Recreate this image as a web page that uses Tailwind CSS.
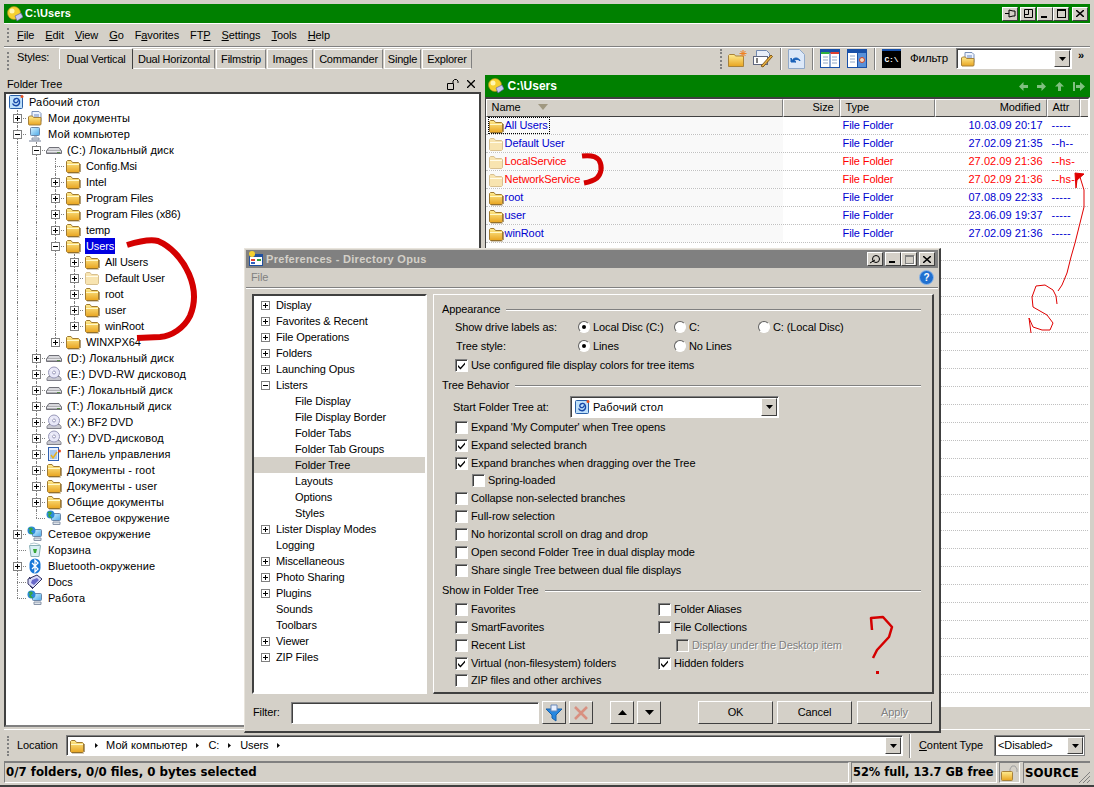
<!DOCTYPE html>
<html lang="en">
<head>
<meta charset="UTF-8">
<title>C:\Users</title>
<script src="https://cdn.jsdelivr.net/npm/@tailwindcss/browser@4"></script>
</head>
<body class="bg-[#d4d0c8]">
<svg width="0" height="0" class="absolute">
  <defs>
    <linearGradient id="fg" x1="0" y1="0" x2="0" y2="1"><stop offset="0" stop-color="#ffec90"/><stop offset="1" stop-color="#e8a420"/></linearGradient>
    <linearGradient id="scr" x1="0" y1="0" x2="1" y2="1"><stop offset="0" stop-color="#d8f4ff"/><stop offset="1" stop-color="#4aa8e8"/></linearGradient>
    <symbol id="folder" viewBox="0 0 16 16"><path d="M1.5 13.5V3.5l1-1h3.5l1.5 2h6l1 1v8l-1 1h-11z" fill="url(#fg)" stroke="#a07a30"/><path d="M2 6.5h12" stroke="#fff8c8"/><path d="M15.5 6v8M3 15h12" stroke="#7a5a20" opacity=".6"/></symbol>
    <symbol id="folderpale" viewBox="0 0 16 16"><path d="M1.5 13.5V3.5l1-1h3.5l1.5 2h6l1 1v8l-1 1h-11z" fill="#f8e4b0" stroke="#d8c090"/><path d="M2 6.5h12" stroke="#fffbe8"/></symbol>
    <symbol id="mydocs" viewBox="0 0 16 16"><path d="M5 1.5h7l2 2v8H5z" fill="#eef4ff" stroke="#7a90b8"/><path d="M7 5h5M7 7h5M7 9h5" stroke="#6a88c0"/><path d="M1.5 14V7l1-1h3l1 1.500h7.500V14l-.5 1H2z" fill="url(#fg)" stroke="#a8823a"/></symbol>
    <symbol id="desktop" viewBox="0 0 16 16"><rect x="1.500" y="1.500" width="13" height="13" rx="1" fill="#bfe0fa" stroke="#2a60a8"/><path d="M4.500 9.500c1.500 3 6 3 7-.500.500-3-1.500-5-3.500-4.500-2.500.500-3 3-1 4 1.500.500 3-.500 3-2" fill="none" stroke="#1848a8" stroke-width="1.400"/><circle cx="14" cy="2.500" r="1.500" fill="#e85020"/></symbol>
    <symbol id="computer" viewBox="0 0 16 16"><rect x="3.500" y="1.500" width="9" height="8" rx="1" fill="url(#scr)" stroke="#6a86a8"/><path d="M5 12h7v2H5z" fill="#dfe4ea" stroke="#8894a8"/><path d="M2 15h12" stroke="#a0a8b8" stroke-width="1.500"/><path d="M7 10h3v2H7z" fill="#b8c0d0"/></symbol>
    <symbol id="drive" viewBox="0 0 16 16"><path d="M3 5.500h10l2.500 3.500v2.500h-15V9z" fill="#b0b0b4" stroke="#707078"/><path d="M1 9.500h14" stroke="#e8e8ec"/><path d="M3 6h10l1 2H2.500z" fill="#d8d8dc"/><rect x="11" y="10" width="3" height="1" fill="#5a8a4a"/></symbol>
    <symbol id="cd" viewBox="0 0 16 16"><path d="M2.500 10.500h11l1.500 2v2H1v-2z" fill="#c8c8d0" stroke="#80808a"/><circle cx="8" cy="6.500" r="5.500" fill="#e8e8f8" stroke="#9898b8"/><circle cx="8" cy="6.500" r="1.500" fill="#fff" stroke="#9898b8"/><path d="M5 3.500l2 2" stroke="#fff"/></symbol>
    <symbol id="panel" viewBox="0 0 16 16"><rect x="2.500" y="1.500" width="10" height="13" fill="#e8f0ff" stroke="#3060b0"/><path d="M4 4h7v9H4z" fill="#a8c8f0"/><path d="M5 9l2 3 4-6" fill="none" stroke="#e8b020" stroke-width="1.500"/><circle cx="13.500" cy="5" r="1.500" fill="#e84820"/></symbol>
    <symbol id="net" viewBox="0 0 16 16"><rect x="5.500" y="3.500" width="9" height="7" rx="1" fill="url(#scr)" stroke="#6a86a8"/><circle cx="4.500" cy="4.500" r="4" fill="#2c8ad8"/><path d="M2 3c1-1 3-1 3 0s-2 1-2 2.500S5 7 5 8" stroke="#38a838" stroke-width="1.600" fill="none"/><path d="M7 12h7v2.500H7z" fill="#dfe4ea" stroke="#8894a8"/></symbol>
    <symbol id="recycle" viewBox="0 0 16 16"><path d="M2.500 3.500h11l-1.500 11H4z" fill="#d8f0f4" stroke="#8ab0b8"/><path d="M6 7h4l-1 4H7z" fill="#38a838"/><path d="M3 2l4-1 4 1 2 1" stroke="#b0c8d0" fill="none"/></symbol>
    <symbol id="bt" viewBox="0 0 16 16"><rect x="2.500" y="0.500" width="11" height="15" rx="5.500" fill="#1878d8"/><path d="M5 5l6 6-3 3V2l3 3-6 6" fill="none" stroke="#fff" stroke-width="1.300"/></symbol>
    <symbol id="docs" viewBox="0 0 16 16"><path d="M1 5l9-4 5 4-9 9-5-4z" fill="#d8d8f8" stroke="#303060"/><path d="M5 6l5-2 2 2-5 5-3-2z" fill="#6868c8"/><path d="M3 12l3 3M2 3l2 2" stroke="#303060"/></symbol>
    <symbol id="up" viewBox="0 0 9 5"><path d="M4.500 0L9 5H0z" fill="#000"/></symbol>
    <symbol id="down" viewBox="0 0 9 5"><path d="M4.500 5L9 0H0z" fill="#000"/></symbol>
    <symbol id="crumb" viewBox="0 0 4 7"><path d="M0 0l4 3.500L0 7z" fill="#000"/></symbol>
    <symbol id="logo" viewBox="0 0 16 16"><circle cx="7" cy="7" r="6.500" fill="#f6d030" stroke="#a88820" stroke-width=".600"/><circle cx="5" cy="5" r="2.500" fill="#fff6b0"/><path d="M8 10l6-3 2 4-6 4z" fill="#c8c8f0" stroke="#5858a0" stroke-width=".600"/></symbol>
    <symbol id="check" viewBox="0 0 9 9"><path d="M1 4l2.500 2.500L8 1.500v2L3.500 8.500 1 6z" fill="#000"/></symbol>
  </defs>
</svg>

<div class="relative w-[1094px] h-[787px] overflow-hidden bg-[#d4d0c8] text-black text-[11px] leading-none font-['Liberation_Sans',sans-serif] tracking-[-0.1px]">
  <div class="flex flex-col h-full pt-[4px] pb-[2px] px-[4px] border-b-2 border-[#404040]">

    <!-- title bar -->
    <div class="h-[19px] shrink-0 bg-[#008000] flex items-center pl-[3px] pr-[2px] text-white font-bold tracking-[0.1px]">
      <svg class="w-4 h-4 mr-[2px]"><use href="#logo"/></svg>
      <span>C:\Users</span>
      <div class="ml-auto flex">
        <div class="w-[16px] h-[14px] bg-[#d4d0c8] border border-t-white border-l-white border-r-[#404040] border-b-[#404040] flex items-center justify-center mr-[2px]"><svg width="11" height="9" viewBox="0 0 11 9"><path d="M0 4.500h4M4 1v7M4 1l4 1h2v5H8L4 8" fill="none" stroke="#000"/></svg></div>
        <div class="w-[16px] h-[14px] bg-[#d4d0c8] border border-t-white border-l-white border-r-[#404040] border-b-[#404040] flex items-center justify-center mr-[1px]"><svg width="9" height="9" viewBox="0 0 9 9"><path d="M.5.5h8v8h-8zM.5 5.500h4v-5" fill="none" stroke="#000"/></svg></div>
        <div class="w-[16px] h-[14px] bg-[#d4d0c8] border border-t-white border-l-white border-r-[#404040] border-b-[#404040] flex items-end pl-[3px] pb-[2px]"><div class="w-[6px] h-[2px] bg-black"></div></div>
        <div class="w-[16px] h-[14px] bg-[#d4d0c8] border border-t-white border-l-white border-r-[#404040] border-b-[#404040] flex items-center justify-center mr-[3px]"><div class="w-[9px] h-[9px] border border-black border-t-2"></div></div>
        <div class="w-[16px] h-[14px] bg-[#d4d0c8] border border-t-white border-l-white border-r-[#404040] border-b-[#404040] flex items-center justify-center"><svg width="8" height="7" viewBox="0 0 8 7"><path d="M0 0l8 7M8 0L0 7" stroke="#000" stroke-width="1.500"/></svg></div>
      </div>
    </div>

    <!-- menu -->
    <div class="h-[24px] shrink-0 flex items-center border-b border-[#808080] shadow-[0_1px_0_#fff] border-t border-t-white">
      <div class="w-[2px] h-[14px] ml-[3px] border-l-2 border-dotted border-[#808080]"></div>
      <div class="flex ml-[8px] gap-[11px]">
        <span><u>F</u>ile</span><span><u>E</u>dit</span><span><u>V</u>iew</span><span><u>G</u>o</span><span>F<u>a</u>vorites</span><span>FT<u>P</u></span><span><u>S</u>ettings</span><span><u>T</u>ools</span><span><u>H</u>elp</span>
      </div>
    </div>

    <!-- toolbar -->
    <div class="h-[26px] shrink-0 flex items-end relative">
      <div class="w-[2px] h-[18px] ml-[3px] mb-[3px] border-l-2 border-dotted border-[#808080]"></div>
      <span class="ml-[8px] mb-[10px] w-[42px]">Styles:</span>
      <div class="flex items-end mb-[4px] tracking-[-0.2px]">
        <div class="h-[21px] w-[74px] flex items-center justify-center border border-b-0 border-t-white border-l-white border-r-[#404040] rounded-t-[2px]">Dual Vertical</div>
        <div class="h-[20px] w-[82px] flex items-center justify-center border border-t-white border-b-white border-l-transparent border-r-[#808080]">Dual Horizontal</div>
        <div class="h-[20px] w-[50px] flex items-center justify-center border border-t-white border-b-white border-l-white border-r-[#808080] ml-px">Filmstrip</div>
        <div class="h-[20px] w-[46px] flex items-center justify-center border border-t-white border-b-white border-l-white border-r-[#808080] ml-px">Images</div>
        <div class="h-[20px] w-[69px] flex items-center justify-center border border-t-white border-b-white border-l-white border-r-[#808080] ml-px">Commander</div>
        <div class="h-[20px] w-[37px] flex items-center justify-center border border-t-white border-b-white border-l-white border-r-[#808080] ml-px">Single</div>
        <div class="h-[20px] w-[50px] flex items-center justify-center border border-t-white border-b-white border-l-white border-r-[#808080] ml-px">Explorer</div>
      </div>
      <div class="ml-auto flex items-center h-[26px] pb-[3px]">
        <div class="w-[2px] h-[20px] border-l-2 border-dotted border-[#808080] mr-[5px]"></div>
        <svg class="w-[20px] h-[20px]" viewBox="0 0 20 20"><path d="M1.500 17.500v-11l1-1h5l1 1.500h8v10.500z" fill="url(#fg)" stroke="#a8823a"/><path d="M16 1v7M12.500 4.500h7M13.500 2l5 5M18.500 2l-5 5" stroke="#f08020"/></svg>
        <svg class="w-[20px] h-[20px] ml-[6px]" viewBox="0 0 20 20"><path d="M3.500 1.500h10l3 3v4h-13z" fill="#e8eef8" stroke="#7088b0"/><rect x=".5" y="7.500" width="14" height="8" fill="#fff" stroke="#606880"/><path d="M4 9v5" stroke="#000"/><path d="M8 17L18 6l1.500 1.500L10 18z" fill="#e8b040" stroke="#805818"/></svg>
        <div class="w-px h-[22px] bg-[#808080] shadow-[1px_0_0_#fff] mx-[7px]"></div>
        <svg class="w-[17px] h-[20px]" viewBox="0 0 17 20"><path d="M.5.5h11l5 5v14H.5z" fill="#dce8f8" stroke="#90a8c8"/><path d="M4 12c1-4 7-4 8 0-1-2-5-2-6 0l2 1H3v-4z" fill="#1860b8" stroke="#1860b8"/></svg>
        <div class="w-px h-[22px] bg-[#808080] shadow-[1px_0_0_#fff] mx-[7px]"></div>
        <svg class="w-[20px] h-[19px]" viewBox="0 0 20 19"><rect width="20" height="19" fill="#1850a8"/><rect x="1" y="4" width="8.500" height="14" fill="#fff"/><rect x="10.500" y="4" width="8.500" height="14" fill="#fff"/><path d="M1 4h8.500" stroke="#30b040" stroke-width="2"/><path d="M10.500 4h8.500" stroke="#e04030" stroke-width="2"/><path d="M3 8h5M3 11h5M3 14h5M12 8h5M12 11h5M12 14h5" stroke="#90a8c8"/></svg>
        <svg class="w-[20px] h-[19px] ml-[7px]" viewBox="0 0 20 19"><rect width="20" height="19" fill="#1850a8"/><rect x="1" y="4" width="9" height="14" fill="#fff"/><rect x="11" y="4" width="8" height="14" fill="#5890d8"/><path d="M3 7h5M3 10h5M3 13h5" stroke="#90a8c8"/><circle cx="15" cy="11" r="2.500" fill="#f0d8c0" stroke="#d04020"/></svg>
        <div class="w-px h-[22px] bg-[#808080] shadow-[1px_0_0_#fff] mx-[7px]"></div>
        <div class="w-[19px] h-[19px] bg-black border-t-2 border-[#1850a8] text-white text-[8px] flex items-center justify-center font-['Liberation_Mono'] font-bold">C:\</div>
        <span class="ml-[9px] mr-[8px] text-[11.500px]">Фильтр</span>
        <div class="w-[116px] h-[21px] bg-white border border-t-[#808080] border-l-[#808080] border-r-white border-b-white shadow-[inset_1px_1px_0_#404040] flex items-center pl-[3px] pr-[1px]">
          <svg class="w-4 h-4"><use href="#mydocs"/></svg>
          <div class="ml-auto w-[16px] h-[17px] bg-[#d4d0c8] border border-t-white border-l-white border-r-[#404040] border-b-[#404040] flex items-center justify-center"><svg width="7" height="4"><use href="#down"/></svg></div>
        </div>
        <span class="w-[18px] pl-[6px] font-bold self-start pt-[3px]">»</span>
      </div>
    </div>

    <!-- panes -->
    <div class="flex-1 flex gap-[4px] mt-[2px] min-h-0">
      <div class="w-[477px] flex flex-col">
        <div class="h-[17px] shrink-0 flex items-center pl-[3px] pt-px">
          <span>Folder Tree</span>
          <svg class="ml-auto" width="12" height="11" viewBox="0 0 12 11"><path d="M.5 4.500h6v6h-6zM6 4V2l1.500-1.500h2L11 2v2" fill="none" stroke="#000"/></svg>
          <svg class="ml-[8px] mr-[6px]" width="8" height="8" viewBox="0 0 8 8"><path d="M0 0l8 8M8 0L0 8" stroke="#000" stroke-width="1.300"/></svg>
        </div>
        <div id="tree" class="flex-1 bg-white border-2 border-t-[#404040] border-l-[#404040] border-r-[#404040] border-b-[#808080] overflow-hidden"></div>
      </div>

      <div class="w-[606px] flex flex-col">
        <div class="h-[22px] shrink-0 bg-[#008000] flex items-center pl-[3px] text-white font-bold text-[12px] tracking-normal">
          <svg class="w-4 h-4 mr-[4px]"><use href="#logo"/></svg>
          <span>C:\Users</span>
          <div class="ml-auto flex items-center gap-[9px] pr-[5px]">
            <svg width="9" height="9" viewBox="0 0 9 9"><path d="M4.500 0v3H9v3H4.500v3L0 4.500z" fill="#80c080"/></svg>
            <svg width="9" height="9" viewBox="0 0 9 9"><path d="M4.500 0v3H0v3h4.500v3L9 4.500z" fill="#80c080"/></svg>
            <svg width="9" height="9" viewBox="0 0 9 9"><path d="M0 4.500L4.500 0 9 4.500H6V9H3V4.500z" fill="#80c080"/></svg>
            <svg width="12" height="9" viewBox="0 0 12 9"><path d="M0 0h2v9H0zM3 3h4V0l5 4.500L7 9V6H3z" fill="#80c080"/></svg>
          </div>
        </div>
        <div class="border-t-2 border-l border-[#404040] border-r-2 border-r-white border-b-white h-[610px] shrink-0 bg-white flex flex-col">
          <div class="h-[18px] shrink-0 flex bg-[#d4d0c8]">
            <div class="w-[297px] flex items-center pl-[5px] pb-[2px] border-t border-l border-t-white border-l-white border-r border-r-[#808080] border-b border-b-[#404040]"><span>Name</span><svg class="ml-[17px]" width="10" height="6" viewBox="0 0 10 6"><path d="M0 0h10L5 6z" fill="#a09880"/></svg></div>
            <div class="w-[57px] flex items-center justify-end pr-[5px] pb-[2px] border-t border-l border-t-white border-l-white border-r border-r-[#808080] border-b border-b-[#404040]">Size</div>
            <div class="w-[95px] flex items-center pl-[5px] pb-[2px] border-t border-l border-t-white border-l-white border-r border-r-[#808080] border-b border-b-[#404040]">Type</div>
            <div class="w-[112px] flex items-center justify-end pr-[5px] pb-[2px] border-t border-l border-t-white border-l-white border-r border-r-[#808080] border-b border-b-[#404040]">Modified</div>
            <div class="w-[33px] flex items-center pl-[5px] pb-[2px] border-t border-l border-t-white border-l-white border-r border-r-[#808080] border-b border-b-[#404040]">Attr</div>
            <div class="flex-1 border-t border-l border-t-white border-l-white border-b border-b-[#404040]"></div>
          </div>
          <div id="files" class="flex-1 overflow-hidden"></div>
        </div>
      </div>
    </div>

    <!-- location -->
    <div class="h-[33px] shrink-0 flex items-center border-b border-[#808080] border-t border-t-white mt-[2px]">
      <div class="w-[2px] h-[20px] ml-[3px] border-l-2 border-dotted border-[#808080]"></div>
      <span class="ml-[8px] w-[49px]">Location</span>
      <div class="w-[837px] h-[21px] bg-white border border-t-[#808080] border-l-[#808080] border-r-white border-b-white shadow-[inset_1px_1px_0_#404040] flex items-center pl-[2px] pr-[1px]">
        <svg class="w-4 h-4 mr-[10px]"><use href="#folder"/></svg>
        <svg width="3" height="5" class="mr-[8px]"><use href="#crumb"/></svg><span class="tracking-[0.1px]">Мой компьютер</span>
        <svg width="3" height="5" class="mx-[9px]"><use href="#crumb"/></svg><span>C:</span>
        <svg width="3" height="5" class="mx-[9px]"><use href="#crumb"/></svg><span>Users</span>
        <svg width="3" height="5" class="ml-[9px]"><use href="#crumb"/></svg>
        <div class="ml-auto w-[16px] h-[17px] bg-[#d4d0c8] border border-t-white border-l-white border-r-[#404040] border-b-[#404040] flex items-center justify-center"><svg width="7" height="4"><use href="#down"/></svg></div>
      </div>
      <div class="w-px h-[24px] bg-[#808080] shadow-[1px_0_0_#fff] ml-[6px]"></div>
      <span class="ml-[9px] w-[75px]"><u>C</u>ontent Type</span>
      <div class="w-[91px] h-[21px] bg-white border border-[#808080] shadow-[inset_1px_1px_0_#404040] flex items-center pl-[3px] pr-[1px]">
        <span>&lt;Disabled&gt;</span>
        <div class="ml-auto w-[16px] h-[17px] bg-[#d4d0c8] border border-t-white border-l-white border-r-[#404040] border-b-[#404040] flex items-center justify-center"><svg width="7" height="4"><use href="#down"/></svg></div>
      </div>
    </div>

    <!-- status -->
    <div class="h-[21px] shrink-0 flex font-bold font-['DejaVu_Sans',sans-serif] text-[11.800px] tracking-normal whitespace-nowrap slashed-zero">
      <div class="w-[845px] flex items-center pl-px pt-px border-t border-l border-t-[#808080] border-l-[#808080] border-b border-r border-b-white border-r-white">0/7 folders, 0/0 files, 0 bytes selected</div>
      <div class="w-[146px] ml-[2px] flex items-center pl-px pt-px border-t border-l border-t-[#808080] border-l-[#808080] border-b border-r border-b-white border-r-white text-[11.400px]">52% full, 13.7 GB free</div>
      <div class="w-[21px] ml-[2px] flex items-center pl-[1px] border-t border-l border-t-[#808080] border-l-[#808080] border-b border-r border-b-white border-r-white">
        <svg width="17" height="16" viewBox="0 0 17 16"><path d="M9 7V4l2-3h3l2 3v3" fill="none" stroke="#a0a0a0"/><rect x=".5" y="6.500" width="11" height="9" rx="1" fill="url(#fg)" stroke="#a8823a"/></svg>
      </div>
      <div class="flex-1 ml-[3px] flex items-center pl-px pt-px relative border-t border-l border-t-[#808080] border-l-[#808080]">SOURCE
        <svg class="absolute right-0 bottom-0" width="12" height="12" viewBox="0 0 12 12"><path d="M12 1L1 12M12 5l-7 7M12 9l-3 3" stroke="#808080"/></svg>
      </div>
    </div>
  </div>

  <!-- preferences dialog -->
  <div class="absolute left-[244px] top-[248px] w-[697px] h-[485px] bg-[#d4d0c8] border-t border-l border-t-[#e8e4dc] border-l-[#e8e4dc] border-r-2 border-b-2 border-r-[#404040] border-b-[#404040] p-px flex flex-col z-10">
    <div class="h-[18px] shrink-0 bg-[#808080] flex items-center pl-[2px] pr-[3px] text-[#d4d0c8] font-bold">
      <svg class="w-4 h-4 mr-[2px]" viewBox="0 0 16 16"><rect x="1.500" y="3.500" width="13" height="11" fill="#fff" stroke="#2050a0"/><path d="M2 4h12v2H2z" fill="#2050a0"/><rect x="3" y="8" width="4" height="2" fill="#e04030"/><rect x="9" y="8" width="4" height="2" fill="#30a040"/><rect x="3" y="11" width="4" height="2" fill="#3060c0"/><circle cx="4" cy="3" r="3" fill="#f6d030"/></svg>
      <span class="tracking-[0.3px]">Preferences - Directory Opus</span>
      <div class="ml-auto flex">
        <div class="w-[16px] h-[14px] bg-[#d4d0c8] border border-t-white border-l-white border-r-[#404040] border-b-[#404040] mr-[2px] flex items-center justify-center"><svg width="12" height="9" viewBox="0 0 12 9"><circle cx="7" cy="4" r="3.500" fill="none" stroke="#000"/><path d="M1 8l5-3" stroke="#000"/></svg></div>
        <div class="w-[16px] h-[14px] bg-[#d4d0c8] border border-t-white border-l-white border-r-[#404040] border-b-[#404040] flex items-end pl-[3px] pb-[2px]"><div class="w-[6px] h-[2px] bg-black"></div></div>
        <div class="w-[16px] h-[14px] bg-[#d4d0c8] border border-t-white border-l-white border-r-[#404040] border-b-[#404040] mr-[2px] flex items-center justify-center"><div class="w-[9px] h-[9px] border border-[#808080] border-t-2 shadow-[1px_1px_0_#fff]"></div></div>
        <div class="w-[16px] h-[14px] bg-[#d4d0c8] border border-t-white border-l-white border-r-[#404040] border-b-[#404040] flex items-center justify-center"><svg width="8" height="7" viewBox="0 0 8 7"><path d="M0 0l8 7M8 0L0 7" stroke="#000" stroke-width="1.500"/></svg></div>
      </div>
    </div>
    <div class="h-[20px] shrink-0 flex items-center pl-[5px] pr-[4px] text-[#808080] border-b border-[#808080] shadow-[0_1px_0_#fff]">
      <span>File</span>
      <svg class="ml-auto" width="15" height="15" viewBox="0 0 15 15"><circle cx="7.500" cy="7.500" r="7" fill="#2070d0" stroke="#90b8e8"/><text x="7.500" y="11" text-anchor="middle" font-size="10" font-weight="bold" font-family="Liberation Sans" fill="#fff">?</text></svg>
    </div>
    <div class="flex mt-[6px] ml-[6px] gap-[6px] h-[400px] shrink-0">
      <div id="prefs" class="w-[175px] bg-white border-2 border-t-[#404040] border-l-[#404040] border-r-white border-b-white pt-px"></div>
      <div class="w-[501px] border border-t-white border-l-white border-r-2 border-b-2 border-r-[#404040] border-b-[#404040] pt-[5px] pl-[8px] pr-[11px]">
        <div class="h-[18px] flex items-center"><span class="mr-[6px]">Appearance</span><div class="flex-1 border-t border-[#808080] shadow-[0_1px_0_#fff]"></div></div>
        <div class="h-[18px] flex items-center pl-[13px]">
          <span class="w-[123px]">Show drive labels as:</span>
          <span class="w-[96px] flex items-center"><i class="w-[12px] h-[12px] mr-[3px] rounded-full bg-white border border-t-[#606060] border-l-[#606060] border-r-white border-b-white flex items-center justify-center"><b class="w-[4px] h-[4px] rounded-full bg-black"></b></i>Local Disc (C:)</span>
          <span class="w-[84px] flex items-center"><i class="w-[12px] h-[12px] mr-[3px] rounded-full bg-white border border-t-[#606060] border-l-[#606060] border-r-white border-b-white"></i>C:</span>
          <span class="flex items-center"><i class="w-[12px] h-[12px] mr-[3px] rounded-full bg-white border border-t-[#606060] border-l-[#606060] border-r-white border-b-white"></i>C: (Local Disc)</span>
        </div>
        <div class="h-[18px] mt-px flex items-center pl-[14px]">
          <span class="w-[122px]">Tree style:</span>
          <span class="w-[96px] flex items-center"><i class="w-[12px] h-[12px] mr-[3px] rounded-full bg-white border border-t-[#606060] border-l-[#606060] border-r-white border-b-white flex items-center justify-center"><b class="w-[4px] h-[4px] rounded-full bg-black"></b></i>Lines</span>
          <span class="flex items-center"><i class="w-[12px] h-[12px] mr-[3px] rounded-full bg-white border border-t-[#606060] border-l-[#606060] border-r-white border-b-white"></i>No Lines</span>
        </div>
        <div class="chk h-[18px] mt-px" data-l="Use configured file display colors for tree items" data-c="1"></div>
        <div class="h-[18px] mt-[2px] flex items-center"><span class="mr-[6px]">Tree Behavior</span><div class="flex-1 border-t border-[#808080] shadow-[0_1px_0_#fff]"></div></div>
        <div class="h-[22px] mt-[2px] flex items-center pl-[11px]">
          <span class="w-[117px]">Start Folder Tree at:</span>
          <div class="w-[209px] h-[22px] bg-white border border-t-[#808080] border-l-[#808080] border-r-white border-b-white shadow-[inset_1px_1px_0_#404040] flex items-center pl-[3px] pr-[1px]">
            <svg class="w-4 h-4 mr-[3px]"><use href="#desktop"/></svg><span class="tracking-[0.1px]">Рабочий стол</span>
            <div class="ml-auto w-[16px] h-[18px] bg-[#d4d0c8] border border-t-white border-l-white border-r-[#404040] border-b-[#404040] flex items-center justify-center"><svg width="7" height="4"><use href="#down"/></svg></div>
          </div>
        </div>
        <div class="chk h-[18px]" data-l="Expand 'My Computer' when Tree opens"></div>
        <div class="chk h-[18px]" data-l="Expand selected branch" data-c="1"></div>
        <div class="chk h-[18px]" data-l="Expand branches when dragging over the Tree" data-c="1"></div>
        <div class="chk h-[17px] pl-[30px]" data-l="Spring-loaded"></div>
        <div class="chk h-[18px]" data-l="Collapse non-selected branches"></div>
        <div class="chk h-[18px]" data-l="Full-row selection"></div>
        <div class="chk h-[18px]" data-l="No horizontal scroll on drag and drop"></div>
        <div class="chk h-[18px]" data-l="Open second Folder Tree in dual display mode"></div>
        <div class="chk h-[18px]" data-l="Share single Tree between dual file displays"></div>
        <div class="h-[18px] mt-[2px] flex items-center"><span class="mr-[6px]">Show in Folder Tree</span><div class="flex-1 border-t border-[#808080] shadow-[0_1px_0_#fff]"></div></div>
        <div class="grid grid-cols-[203px_1fr] mt-px">
          <div>
            <div class="chk h-[18px]" data-l="Favorites"></div>
            <div class="chk h-[18px]" data-l="SmartFavorites"></div>
            <div class="chk h-[18px]" data-l="Recent List"></div>
            <div class="chk h-[18px]" data-l="Virtual (non-filesystem) folders" data-c="1"></div>
            <div class="chk h-[17px]" data-l="ZIP files and other archives"></div>
          </div>
          <div>
            <div class="chk h-[18px]" data-l="Folder Aliases"></div>
            <div class="chk h-[18px]" data-l="File Collections"></div>
            <div class="chk h-[18px] pl-[31px]" data-l="Display under the Desktop item" data-d="1"></div>
            <div class="chk h-[18px]" data-l="Hidden folders" data-c="1"></div>
          </div>
        </div>
      </div>
    </div>
    <div class="flex items-center mt-[7px] ml-[7px] h-[23px] shrink-0">
      <span class="w-[38px]">Filter:</span>
      <div class="w-[248px] h-[22px] bg-white border border-t-[#808080] border-l-[#808080] border-r-white border-b-white shadow-[inset_1px_1px_0_#404040]"></div>
      <div class="w-[24px] h-[23px] ml-[3px] border border-t-white border-l-white border-r-[#404040] border-b-[#404040] flex items-center justify-center"><svg width="18" height="18" viewBox="0 0 18 18"><path d="M1 5h16l-6 6v6l-4-3v-3z" fill="#2888e0" stroke="#1860a8"/><path d="M6 1h6v6H6z" fill="#e8f0ff" stroke="#6888b8"/></svg></div>
      <div class="w-[24px] h-[23px] ml-[3px] border border-t-white border-l-white border-r-[#404040] border-b-[#404040] flex items-center justify-center"><svg width="14" height="14" viewBox="0 0 14 14"><path d="M1 1l12 12M13 1L1 13" stroke="#d89080" stroke-width="2.600"/></svg></div>
      <div class="w-[24px] h-[23px] ml-[17px] border border-t-white border-l-white border-r-[#404040] border-b-[#404040] flex items-center justify-center"><svg width="9" height="5"><use href="#up"/></svg></div>
      <div class="w-[24px] h-[23px] ml-[3px] border border-t-white border-l-white border-r-[#404040] border-b-[#404040] flex items-center justify-center"><svg width="9" height="5"><use href="#down"/></svg></div>
      <div class="w-[75px] h-[23px] ml-[37px] border border-t-white border-l-white border-r-[#404040] border-b-[#404040] flex items-center justify-center">OK</div>
      <div class="w-[75px] h-[23px] ml-[4px] border border-t-white border-l-white border-r-[#404040] border-b-[#404040] flex items-center justify-center">Cancel</div>
      <div class="w-[75px] h-[23px] ml-[5px] border border-t-white border-l-white border-r-[#404040] border-b-[#404040] flex items-center justify-center text-[#808080] [text-shadow:1px_1px_0_#fff]">Apply</div>
    </div>
  </div>

  <!-- red marker scribbles on top of the screenshot -->
  <svg class="absolute inset-0 z-20 pointer-events-none" width="1094" height="787" fill="none" stroke-linejoin="round">
    <path d="M127 245C140 241 150 239 158 241C170 246 182 258 189 274C195 288 196 302 190 316C184 328 172 336 160 337L137 338" stroke="#d40000" stroke-width="6"/>
    <path d="M582 156C590 155 596 156 599 160C603 167 601 174 597 178C593 181 589 182 584 183" stroke="#d40000" stroke-width="5"/>
    <path d="M1058 291L1062 285L1067 273L1071 257L1075 243L1080 223L1084 207L1084 190L1080 177" stroke="#e00000" stroke-width="1"/>
    <path d="M1075 173L1084 174L1077 180L1076 188Z" fill="#e00000" stroke="#e00000" stroke-width="1"/>
    <path d="M1057 304L1056 296L1053 290L1045 285L1036 286L1032 297L1033 307L1047 315L1053 323L1050 330L1042 330L1033 327L1029 318L1031 333" stroke="#e00000" stroke-width="1"/>
    <path d="M872 630L871 618L883 617L892 627L889 637L877 650L873 658" stroke="#d40000" stroke-width="2.500"/>
    <rect x="876" y="671" width="3" height="3" fill="#d40000"/>
  </svg>
</div>

<script>
// [level, expander, icon, label]
const treeData = [
  [0,'','desktop','Рабочий стол'],
  [1,'+','mydocs','Мои документы'],
  [1,'-','computer','Мой компьютер'],
  [2,'-','drive','(C:) Локальный диск'],
  [3,'','folder','Config.Msi'],
  [3,'+','folder','Intel'],
  [3,'+','folder','Program Files'],
  [3,'+','folder','Program Files (x86)'],
  [3,'+','folder','temp'],
  [3,'-','folder','Users'],
  [4,'+','folder','All Users'],
  [4,'+','folderpale','Default User'],
  [4,'+','folder','root'],
  [4,'+','folder','user'],
  [4,'+','folder','winRoot'],
  [3,'+','folder','WINXPX64'],
  [2,'+','drive','(D:) Локальный диск'],
  [2,'+','cd','(E:) DVD-RW дисковод'],
  [2,'+','drive','(F:) Локальный диск'],
  [2,'+','drive','(T:) Локальный диск'],
  [2,'+','cd','(X:) BF2 DVD'],
  [2,'+','cd','(Y:) DVD-дисковод'],
  [2,'+','panel','Панель управления'],
  [2,'+','folder','Документы - root'],
  [2,'+','folder','Документы - user'],
  [2,'+','folder','Общие документы'],
  [2,'','net','Сетевое окружение'],
  [1,'+','net','Сетевое окружение'],
  [1,'','recycle','Корзина'],
  [1,'+','bt','Bluetooth-окружение'],
  [1,'','docs','Docs'],
  [1,'','net','Работа']
];

// x of the dotted spine for a level, relative to the inside of the tree box
const spine = l => 11 + (l - 1) * 19;

function hasNext(i, k) {
  for (let j = i + 1; j < treeData.length; j++) {
    if (treeData[j][0] < k) return false;
    if (treeData[j][0] === k) return true;
  }
  return false;
}

function box(x, sign) {
  const bar = sign === '-' ? '' : '<span class="absolute left-[3px] top-[1px] w-px h-[5px] bg-black"></span>';
  return `<span class="absolute top-[4px] w-[9px] h-[9px] bg-white border border-[#808080]" style="left:${x - 4}px"><span class="absolute left-[1px] top-[3px] w-[5px] h-px bg-black"></span>${bar}</span>`;
}

document.getElementById('tree').innerHTML = treeData.map((r, i) => {
  const [lvl, exp, icon, label] = r;
  let guides = '';
  for (let k = 1; k <= lvl; k++) {
    const x = spine(k);
    if (k === lvl) {
      const h = hasNext(i, k) ? 'h-4' : 'h-[8px]';
      guides += `<span class="absolute top-0 ${h} border-l border-dotted border-[#808080]" style="left:${x}px"></span>`;
      guides += `<span class="absolute top-[8px] w-[9px] border-t border-dotted border-[#808080]" style="left:${x}px"></span>`;
    } else if (hasNext(i, k)) {
      guides += `<span class="absolute top-0 h-4 border-l border-dotted border-[#808080]" style="left:${x}px"></span>`;
    }
  }
  const left = lvl === 0 ? 2 : spine(lvl) + 10;
  const sel = label === 'Users' ? 'bg-[#0000e0] text-white' : '';
  const track = /[а-яё]/i.test(label) ? 'tracking-[0.15px]' : '';
  return `<div class="relative h-4 flex items-center" style="padding-left:${left}px">${guides}${exp ? box(spine(lvl), exp) : ''}<svg class="relative w-4 h-4 mr-[4px]"><use href="#${icon}"/></svg><span class="relative px-px h-4 leading-4 ${sel} ${track}">${label}</span></div>`;
}).join('');

const fileData = [
  ['All Users','10.03.09 20:17','-----',0,'folder'],
  ['Default User','27.02.09 21:35','--h--',0,'folderpale'],
  ['LocalService','27.02.09 21:36','--hs-',1,'folderpale'],
  ['NetworkService','27.02.09 21:36','--hs-',1,'folderpale'],
  ['root','07.08.09 22:33','-----',0,'folder'],
  ['user','23.06.09 19:37','-----',0,'folder'],
  ['winRoot','27.02.09 21:36','-----',0,'folder']
];
let filesHtml = fileData.map((f, i) => {
  const col = f[3] ? 'text-[#ff0000]' : 'text-[#0000d0]';
  const focus = i === 0 ? 'outline outline-1 outline-dotted outline-black -outline-offset-1' : '';
  return `<div class="h-[18px] flex items-center border-b border-dotted border-[#c0c0c0] ${col}">
    <div class="w-[297px] h-full bg-[#f9f9f9] pl-[2px] flex items-center"><span class="flex items-center h-[17px] pr-[2px] ${focus}"><svg class="w-4 h-4 mr-[1px]"><use href="#${f[4]}"/></svg>${f[0]}</span></div>
    <div class="w-[57px]"></div>
    <div class="w-[95px] pl-[3px]">File Folder</div>
    <div class="w-[112px] text-right pr-[4px] tracking-[0.05px]">${f[1]}</div>
    <div class="pl-[5px] tracking-[0.2px]">${f[2]}</div>
  </div>`;
}).join('');
for (let i = 0; i < 25; i++) filesHtml += '<div class="h-[18px] border-b border-dotted border-[#c0c0c0]"></div>';
document.getElementById('files').innerHTML = filesHtml;

// [label, kind] kind: + or - expandable, blank top level, c child, s selected child
const prefsData = [
  ['Display','+'],['Favorites & Recent','+'],['File Operations','+'],['Folders','+'],['Launching Opus','+'],['Listers','-'],
  ['File Display','c'],['File Display Border','c'],['Folder Tabs','c'],['Folder Tab Groups','c'],['Folder Tree','s'],['Layouts','c'],['Options','c'],['Styles','c'],
  ['Lister Display Modes','+'],['Logging',''],['Miscellaneous','+'],['Photo Sharing','+'],['Plugins','+'],['Sounds',''],['Toolbars',''],['Viewer','+'],['ZIP Files','+']
];
document.getElementById('prefs').innerHTML = prefsData.map(([t, k]) => {
  const child = k === 'c' || k === 's';
  const bg = k === 's' ? 'bg-[#d4d0c8]' : '';
  const pad = child ? 'pl-[41px]' : 'pl-[22px]';
  const b = (k === '+' || k === '-') ? box(11, k) : '';
  return `<div class="relative h-4 flex items-center ${pad} ${bg}">${b}<span>${t.replace('&', '&amp;')}</span></div>`;
}).join('');

document.querySelectorAll('.chk').forEach(el => {
  const on = el.dataset.c, off = el.dataset.d;
  const mark = on ? '<svg width="9" height="9"><use href="#check"/></svg>' : '';
  const bg = off ? 'bg-[#d4d0c8]' : 'bg-white';
  const txt = off ? 'text-[#808080] [text-shadow:1px_1px_0_#fff]' : '';
  el.classList.add('flex', 'items-center');
  if (!el.className.includes('pl-[')) el.classList.add('pl-[13px]');
  el.innerHTML = `<i class="w-[13px] h-[13px] shrink-0 mr-[3px] ${bg} border border-t-[#808080] border-l-[#808080] border-r-white border-b-white shadow-[inset_1px_1px_0_#404040] flex items-center justify-center">${mark}</i><span class="${txt}">${el.dataset.l}</span>`;
});
</script>
</body>
</html>
